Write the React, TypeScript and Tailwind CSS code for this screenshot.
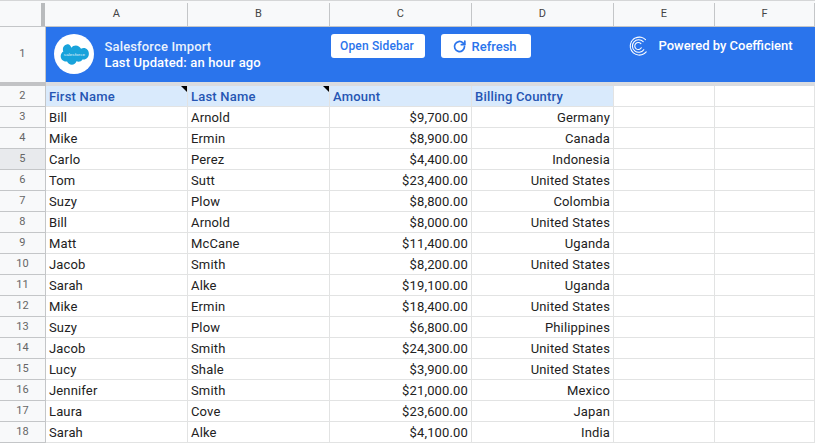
const rows: [string, string, string, string][] = [
  ["Bill", "Arnold", "$9,700.00", "Germany"],
  ["Mike", "Ermin", "$8,900.00", "Canada"],
  ["Carlo", "Perez", "$4,400.00", "Indonesia"],
  ["Tom", "Sutt", "$23,400.00", "United States"],
  ["Suzy", "Plow", "$8,800.00", "Colombia"],
  ["Bill", "Arnold", "$8,000.00", "United States"],
  ["Matt", "McCane", "$11,400.00", "Uganda"],
  ["Jacob", "Smith", "$8,200.00", "United States"],
  ["Sarah", "Alke", "$19,100.00", "Uganda"],
  ["Mike", "Ermin", "$18,400.00", "United States"],
  ["Suzy", "Plow", "$6,800.00", "Philippines"],
  ["Jacob", "Smith", "$24,300.00", "United States"],
  ["Lucy", "Shale", "$3,900.00", "United States"],
  ["Jennifer", "Smith", "$21,000.00", "Mexico"],
  ["Laura", "Cove", "$23,600.00", "Japan"],
  ["Sarah", "Alke", "$4,100.00", "India"],
];

const cols = "grid grid-cols-[46px_142px_142px_142px_142px_101px_100px] grid-rows-[21px]";
const cell = "border-r border-b border-[#e2e3e3] px-[3px] truncate leading-[22px]";

function Note() {
  return <span className="absolute right-0 top-0 border-t-[6px] border-l-[6px] border-t-black border-l-transparent" />;
}

function Salesforce() {
  return (
    <div className="w-10 h-10 rounded-full bg-white flex items-center justify-center shrink-0">
      <svg viewBox="0 0 34 24" className="w-[30px] h-[21px]">
        <path
          fill="#18a3db"
          d="M14 4.2C15.2 2.6 17 1.6 19 1.6c2.6 0 4.9 1.5 6 3.7 1-.4 2-.7 3-.7 3.6 0 6 3 6 6.6s-2.6 6.6-6 6.6c-.5 0-1 0-1.400-.2-.9 1.500-2.600 2.600-4.500 2.600-.8 0-1.600-.2-2.300-.5C19 22.300 17 23.600 14.600 23.600c-2.500 0-4.600-1.500-5.500-3.700-.4.1-.9.1-1.300.1-3.300 0-6-2.700-6-6 0-2.200 1.200-4.200 3-5.300C4.400 7.900 4.300 7 4.300 6.300 4.300 2.900 7 .4 10.200.4 11.800.4 13 1.900 14 4.200Z"
        />
        <text x="17.500" y="13.800" textAnchor="middle" fontSize="5" fill="#e6f5fb" fontFamily="'Liberation Sans', sans-serif">salesforce</text>
      </svg>
    </div>
  );
}

function Coefficient() {
  return (
    <svg viewBox="0 0 20 20" className="w-[20px] h-[20px] shrink-0" fill="none" stroke="#fff" strokeLinecap="round">
      <path strokeWidth="1.100" d="M17.500 3.600A9 9 0 1 0 18.200 15.800" strokeDasharray="5 0.800" />
      <path strokeWidth="1.100" d="M15.200 5.600A6.300 6.300 0 1 0 15.800 13.700" />
      <path strokeWidth="1.100" d="M12.900 7.700A3.500 3.500 0 1 0 13.300 11.800" />
    </svg>
  );
}

export default function App() {
  return (
    <div className="w-[815px] h-[445px] overflow-hidden bg-white text-[13px] tracking-[0.15px] text-[#222] font-['Roboto','Liberation_Sans',sans-serif]">
      <div className="grid grid-cols-[46px_142px_142px_142px_142px_101px_100px] h-[27px] pt-[2px] bg-[#f8f9fa] text-[11px] text-[#444] border-t border-[#d5d6d7]">
        <div className="border-b border-[#c4c6c8] flex justify-end">
          <div className="w-[4px] mr-[1px] bg-[#b9bbbd]" />
        </div>
        {["A", "B", "C", "D", "E", "F"].map((c) => (
          <div key={c} className="border-r border-b border-[#c4c6c8] flex items-center justify-center">{c}</div>
        ))}
      </div>

      <div className="flex h-[55px]">
        <div className="w-[46px] shrink-0 bg-[#f8f9fa] border-r border-[#c4c6c8] flex items-center justify-center text-[11px] text-[#666]">1</div>
        <div className="flex-1 bg-[#2a74ec] flex items-start text-white text-[13px] leading-[16px]">
          <div className="ml-[8px] mt-[7px]"><Salesforce /></div>
          <div className="ml-[10.500px] mt-[12px] w-[226px] shrink-0 font-medium">
            <div className="text-[#e9f1fd]">Salesforce Import</div>
            <div>Last Updated: an hour ago</div>
          </div>
          <button className="mt-[7px] h-6 w-[94px] pr-[1px] rounded-[3px] bg-white text-[#2a74ec] text-[12px] font-medium">Open Sidebar</button>
          <button className="ml-[16px] mt-[7px] h-6 w-[90px] pl-[11px] pt-[1px] rounded-[3px] bg-white text-[#2a74ec] text-[13px] tracking-normal font-medium flex items-center gap-[5px]">
            <svg viewBox="0 0 24 24" className="w-[15px] h-[15px]" fill="none" stroke="#2a74ec" strokeWidth="2.800" strokeLinecap="round" strokeLinejoin="round">
              <path d="M20 12a8 8 0 1 1-2.500-5.800L20 8.500" />
              <path d="M20.500 3.500v5.500H15" />
            </svg>
            Refresh
          </button>
          <div className="ml-[97px] mt-[9px] flex items-center gap-[11px] text-[13px] tracking-normal font-medium">
            <Coefficient />
            <span className="-mt-[1px]">Powered by Coefficient</span>
          </div>
        </div>
      </div>

      <div className="flex h-[4px] bg-[#dadce0]">
        <div className="w-[46px] bg-[#c2c3c5]" />
      </div>

      <div className={`${cols} h-[21px] font-medium`}>
        <div className="bg-[#f8f9fa] border-r border-b border-[#c4c6c8] flex items-center justify-center text-[11px] text-[#666] font-normal">2</div>
        <div className={`${cell} relative bg-[#d9eafc] text-[#2555b3] tracking-[0.2px]`}>First Name<Note /></div>
        <div className={`${cell} relative bg-[#d9eafc] text-[#2555b3] tracking-[0.2px]`}>Last Name<Note /></div>
        <div className={`${cell} bg-[#d9eafc] text-[#2555b3] tracking-[0.2px]`}>Amount</div>
        <div className={`${cell} bg-[#d9eafc] text-[#2555b3] tracking-[0.2px]`}>Billing Country</div>
        <div className={cell} />
        <div className={cell} />
      </div>

      {rows.map((r, i) => (
        <div key={i} className={`${cols} h-[21px]`}>
          <div className={`border-r border-b border-[#c4c6c8] flex items-center justify-center text-[11px] text-[#666] ${i === 2 ? "bg-[#e8eaed]" : "bg-[#f8f9fa]"}`}>{i + 3}</div>
          <div className={cell}>{r[0]}</div>
          <div className={cell}>{r[1]}</div>
          <div className={`${cell} text-right`}>{r[2]}</div>
          <div className={`${cell} text-right`}>{r[3]}</div>
          <div className={cell} />
          <div className={cell} />
        </div>
      ))}
    </div>
  );
}
